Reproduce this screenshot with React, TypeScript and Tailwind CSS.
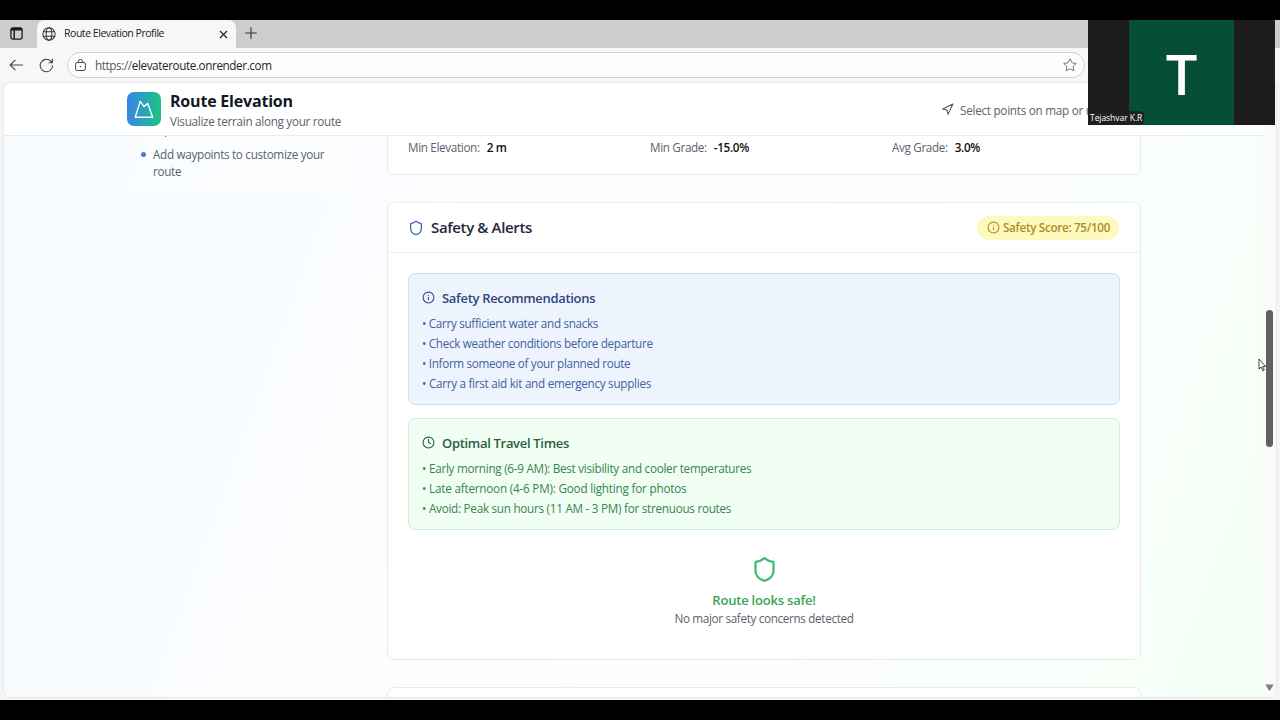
import { Info, Clock, Shield, Navigation } from "lucide-react";
import type { ReactNode } from "react";

const recommendations = [
  { text: "Carry sufficient water and snacks", cls: "tracking-[-0.32px]" },
  { text: "Check weather conditions before departure", cls: "tracking-[-0.33px]" },
  { text: "Inform someone of your planned route", cls: "tracking-[-0.32px]" },
  { text: "Carry a first aid kit and emergency supplies", cls: "tracking-[-0.28px]" },
];

const travelTimes = [
  { text: "Early morning (6-9 AM): Best visibility and cooler temperatures", cls: "tracking-[-0.26px]" },
  { text: "Late afternoon (4-6 PM): Good lighting for photos", cls: "tracking-[-0.2px]" },
  { text: "Avoid: Peak sun hours (11 AM - 3 PM) for strenuous routes", cls: "tracking-[-0.26px]" },
];

function TabStrip() {
  return (
    <div className="flex h-7 shrink-0 bg-[#cdcdcd]">
      <div className="w-[37px] shrink-0 rounded-br-md bg-[#cdcdcd] pl-[10px] pt-[7px]">
        <svg width="13" height="13" viewBox="0 0 13 13" fill="none" stroke="#1b1b1b" strokeWidth="1.3">
          <rect x="0.9" y="0.9" width="11.2" height="11.2" rx="2" />
          <path d="M1 2.7h11M4.2 3v9" strokeWidth="1.5" />
          <path d="M1.4 1.8h10.2" strokeWidth="1.6" />
        </svg>
      </div>
      <div className="flex w-[199px] shrink-0 items-center rounded-t-lg bg-[#f7f7f7] pl-[5px] pr-2">
        <svg width="14" height="14" viewBox="0 0 15 15" fill="none" stroke="#333" strokeWidth="1.1">
          <circle cx="7.5" cy="7.5" r="6.6" />
          <ellipse cx="7.5" cy="7.5" rx="3" ry="6.6" />
          <path d="M1.4 5.2h12.2M1.4 9.8h12.2" />
        </svg>
        <span className="ml-2 text-[10.5px] tracking-[-0.46px] text-[#222]">Route Elevation Profile</span>
        <svg className="ml-auto" width="9" height="9" viewBox="0 0 9 9" stroke="#222" strokeWidth="1.2">
          <path d="M1 1l7 7M8 1l-7 7" />
        </svg>
      </div>
      <svg className="ml-[9px] mt-[7px]" width="12" height="12" viewBox="0 0 12 12" stroke="#333" strokeWidth="1.1">
        <path d="M6 .3v11.4M.3 6h11.4" />
      </svg>
    </div>
  );
}

function AddressBar() {
  return (
    <div className="flex h-[34px] shrink-0 items-center bg-[#f7f7f7] pl-[9px]">
      <svg width="15" height="12" viewBox="0 0 15 12" fill="none" stroke="#444" strokeWidth="1.1">
        <path d="M14 6H1.2M6.4 .8L1.2 6l5.2 5.2" />
      </svg>
      <svg className="ml-[15px]" width="15" height="15" viewBox="0 0 15 15" fill="none" stroke="#444" strokeWidth="1.1">
        <path d="M13.6 7.5A6.2 6.2 0 1 1 11.7 3L13.4 4.6M13.4 .9v3.8H9.6" />
      </svg>
      <div className="ml-[13px] flex h-[26px] w-[1018px] items-center rounded-full border border-[#d2d2d2] bg-[#fdfdfd] pl-[7px] pr-[7px]">
        <svg width="11" height="13" viewBox="0 0 11 13" fill="none" stroke="#444" strokeWidth="1">
          <rect x=".6" y="3.5" width="9.8" height="8" rx="1.6" />
          <path d="M3.3 3.5V2.6a2.2 2.2 0 0 1 4.4 0v.9" />
          <circle cx="5.5" cy="7.5" r=".7" fill="#444" stroke="none" />
        </svg>
        <span className="ml-[9px] pt-px text-[11.7px] tracking-[-0.39px] text-[#555]">
          https://<span className="text-[#1f1f1f]">elevateroute.onrender.com</span>
        </span>
        <svg className="ml-auto" width="14" height="14" viewBox="0 0 14 14" fill="none" stroke="#777" strokeWidth="1" strokeLinejoin="round">
          <path d="M7 .8l1.9 4 4.4.6-3.2 3.1.8 4.4L7 10.8l-3.9 2.1.8-4.4L.7 5.4l4.4-.6z" />
        </svg>
      </div>
    </div>
  );
}

function SiteHeader() {
  return (
    <header className="h-[53px] w-[1260px] shrink-0 border-b border-[#e9ebed] bg-white">
      <div className="ml-[123px] flex h-full w-[1013px] items-center">
        <div className="flex h-[34px] w-[34px] items-center justify-center rounded-[7px] bg-linear-to-r from-[#3b82e6] to-[#1fc27d]">
          <svg width="20" height="19" viewBox="0 0 20 19" fill="none" stroke="white" strokeWidth="1.4" strokeLinejoin="round">
            <path d="M1.2 17.2L6.2 1.4l3.9 5.2 3.7-3.2 4.9 13.8z" />
          </svg>
        </div>
        <div className="ml-[9px] pt-[3px]">
          <h1 className="text-[16px] font-bold leading-[21px] tracking-[-0.2px] text-[#111827]">Route Elevation</h1>
          <p className="text-[11.7px] leading-[18px] tracking-[-0.28px] text-[#5b626d]">Visualize terrain along your route</p>
        </div>
        <Navigation className="ml-auto" size={13} color="#4b5563" />
        <span className="ml-[6px] mr-[47px] w-[133px] whitespace-nowrap pt-px text-[11.7px] leading-[18px] tracking-[-0.26px] text-[#5b626d]">Select points on map or u</span>
      </div>
    </header>
  );
}

function Stat({ label, value }: { label: string; value: string }) {
  return (
    <div className="flex gap-[7px] text-[11.7px] leading-[17px] tracking-[-0.34px]">
      <span className="text-[#5b626d]">{label}</span>
      <span className="font-semibold text-[#111]">{value}</span>
    </div>
  );
}

function Notice({ box, title, icon, items, titleCls, itemCls }: {
  box: string; title: string; icon: ReactNode; items: { text: string; cls: string }[]; titleCls: string; itemCls: string;
}) {
  return (
    <section className={`rounded-[7px] border px-[13px] pt-[13px] ${box}`}>
      <h3 className={`flex items-center gap-[7px] text-[13px] font-semibold leading-[20px] tracking-[-0.31px] ${titleCls}`}>
        {icon}
        <span className="pt-px">{title}</span>
      </h3>
      <ul className={`mt-[5px] text-[11.7px] leading-[20px] ${itemCls}`}>
        {items.map((it) => (
          <li key={it.text} className={it.cls}>• {it.text}</li>
        ))}
      </ul>
    </section>
  );
}

function SafetyCard() {
  return (
    <section className="mt-[27px] h-[458px] shrink-0 rounded-[7px] border border-[#e8eaed] bg-white">
      <div className="flex h-[50px] items-center justify-between border-b border-[#eef0f2] pl-[20px] pr-[21px]">
        <h2 className="flex items-center gap-[7px] text-[15px] font-semibold tracking-[-0.36px] text-[#1f2937]">
          <Shield size={16} color="#3d6cc0" />
          <span>Safety &amp; Alerts</span>
        </h2>
        <div className="flex h-[24px] w-[142px] items-center gap-[3px] rounded-full bg-[#fdfac0] pl-[10px] text-[11.7px] font-semibold tracking-[-0.32px] text-[#b08d1c]">
          <Info size={13} />
          <span className="pt-px">Safety Score: 75/100</span>
        </div>
      </div>
      <div className="px-[20px] pt-[20px]">
        <Notice
          box="h-[132px] border-[#cfdff0] bg-[#eef4fd]"
          title="Safety Recommendations"
          icon={<Info size={13} />}
          items={recommendations}
          titleCls="text-[#2f4580]"
          itemCls="text-[#43609f]"
        />
        <Notice
          box="mt-[13px] h-[112px] border-[#cdeedb] bg-[#f0fef3]"
          title="Optimal Travel Times"
          icon={<Clock size={13} />}
          items={travelTimes}
          titleCls="text-[#2b5e40]"
          itemCls="text-[#39834f]"
        />
        <div className="mt-[26px] flex flex-col items-center">
          <Shield size={27} color="#3fba6c" />
          <p className="mt-[7px] text-[13px] font-semibold leading-[20px] tracking-[-0.2px] text-[#38a457]">Route looks safe!</p>
          <p className="text-[11.7px] leading-[17px] tracking-[-0.33px] text-[#5b626d]">No major safety concerns detected</p>
        </div>
      </div>
    </section>
  );
}

function MeetingTile() {
  return (
    <aside className="absolute left-[1088px] top-[20px] flex h-[105px] w-[187px] justify-center bg-[#1c1c1c]">
      <div className="flex h-full w-[105px] items-center justify-center bg-[#064e36] text-[56px] font-semibold text-white">T</div>
      <span className="absolute bottom-0 left-0 h-[14px] rounded-sm bg-[#1f1f1f]/90 px-[2px] text-[8.5px] leading-[14px] tracking-[-0.05px] text-white">Tejashvar K.R</span>
    </aside>
  );
}

export default function App() {
  return (
    <div className="relative h-[720px] w-[1280px] overflow-hidden bg-black py-[20px] font-['Open_Sans','Noto_Sans',sans-serif]">
      <div className="flex h-[680px] flex-col bg-[#f5f5f5]">
        <TabStrip />
        <AddressBar />
        <div className="ml-[3px] mr-[3px] flex h-[616px] flex-col overflow-hidden rounded-lg border border-[#e8e8e8] bg-[#fafafa]">
          <SiteHeader />
          <div className="flex min-h-0 flex-1">
            <div className="flex flex-1 bg-[linear-gradient(110deg,#f5fbff_0%,#f8fcff_18%,#fdfdff_36%,#fdfefe_65%,#f7fff9_90%,#f3fff5_100%)] pl-[123px]">
              <div className="h-[57px] w-[234px] bg-white/40 pl-[14px]">
                <div className="ml-[24px] h-px w-px bg-[#5b626d]" />
                <div className="mt-[9px] flex gap-[7px] text-[11.7px] leading-[17px] tracking-[-0.3px] text-[#5b626d]">
                  <span className="mt-[6px] h-[5px] w-[5px] shrink-0 rounded-full bg-[#4a7bd8]" />
                  <p>Add waypoints to customize your<br />route</p>
                </div>
              </div>
              <div className="ml-[26px] flex w-[754px] flex-col">
                <div className="grid h-[39px] shrink-0 grid-cols-[242px_242px_auto] rounded-b-[7px] border border-t-0 border-[#e8eaed] bg-white pl-[20px] pt-[3px]">
                  <Stat label="Min Elevation:" value="2 m" />
                  <Stat label="Min Grade:" value="-15.0%" />
                  <Stat label="Avg Grade:" value="3.0%" />
                </div>
                <SafetyCard />
                <div className="mt-[27px] h-[40px] shrink-0 rounded-t-[7px] border border-[#e8eaed] bg-white" />
              </div>
            </div>
            <div className="flex w-[14px] flex-col items-center bg-[#fafafa]">
              <div className="mt-[174px] h-[137px] w-[7px] rounded-full bg-[#606060]" />
              <svg className="mt-auto mb-[6px]" width="9" height="7" viewBox="0 0 9 7" fill="#7f7f7f">
                <path d="M.3 .5h8.4L5 6.4H4z" />
              </svg>
            </div>
          </div>
        </div>
      </div>
      <MeetingTile />
      <svg className="absolute left-[1258px] top-[358px]" width="9" height="14" viewBox="0 0 9 14" fill="white" stroke="#333" strokeWidth=".9">
        <path d="M1 1v10l2.2-2 1.6 3.7 1.5-.7-1.6-3.5h3z" />
      </svg>
    </div>
  );
}
